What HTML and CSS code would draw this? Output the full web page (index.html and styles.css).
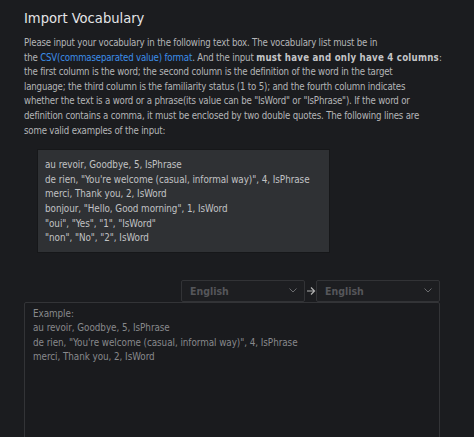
FILE: index.html
```html
<!DOCTYPE html>
<html>
<head>
<meta charset="utf-8">
<link rel="stylesheet" href="styles.css">
</head>
<body>
<div class="page">
  <h1 class="title">Import Vocabulary</h1>
  <p class="intro">Please input your vocabulary in the following text box. The vocabulary list must be in<br>the <a class="link" href="#">CSV(commaseparated value) format</a>. And the input <b>must have and only have 4 columns</b>:<br>the first column is the word; the second column is the definition of the word in the target<br>language; the third column is the familiarity status (1 to 5); and the fourth column indicates<br>whether the text is a word or a phrase(its value can be "IsWord" or "IsPhrase"). If the word or<br>definition contains a comma, it must be enclosed by two double quotes. The following lines are<br>some valid examples of the input:</p>
  <div class="example">
    <div>au revoir, Goodbye, 5, IsPhrase</div>
    <div>de rien, "You're welcome (casual, informal way)", 4, IsPhrase</div>
    <div>merci, Thank you, 2, IsWord</div>
    <div>bonjour, "Hello, Good morning", 1, IsWord</div>
    <div>"oui", "Yes", "1", "IsWord"</div>
    <div>"non", "No", "2", IsWord</div>
  </div>
  <div class="langs">
    <div class="select"><span>English</span><svg class="chev" width="8" height="5" viewBox="0 0 8 5"><path d="M0.5 0.5 L4 4 L7.5 0.5" fill="none" stroke="#6a6b6e" stroke-width="1"/></svg></div>
    <svg class="arrow" width="10" height="10" viewBox="0 0 10 10"><path d="M1 5 H8.5 M5 1.5 L8.5 5 L5 8.5" fill="none" stroke="#b0b0b0" stroke-width="1.2"/></svg>
    <div class="select"><span>English</span><svg class="chev" width="8" height="5" viewBox="0 0 8 5"><path d="M0.5 0.5 L4 4 L7.5 0.5" fill="none" stroke="#6a6b6e" stroke-width="1"/></svg></div>
  </div>
  <div class="input">
    <div>Example:</div>
    <div>au revoir, Goodbye, 5, IsPhrase</div>
    <div>de rien, "You're welcome (casual, informal way)", 4, IsPhrase</div>
    <div>merci, Thank you, 2, IsWord</div>
  </div>
</div>
</body>
</html>
```
FILE: styles.css
```css
html, body {
  margin: 0;
  padding: 0;
  background: #1b1c1f;
  height: 100%;
  overflow: hidden;
}
.page {
  width: 416px;
  padding: 9px 0 0 24px;
  font-family: "DejaVu Sans Condensed", "DejaVu Sans", sans-serif;
  color: #b4b5b7;
}
.title {
  margin: 0;
  font-weight: normal;
  font-size: 14.6px;
  line-height: 18px;
  color: #e4e5e7;
}
.intro {
  margin: 9px 0 0;
  font-size: 9.6px;
  line-height: 14.6px;
  white-space: nowrap;
  letter-spacing: -0.18px;
}
.intro b {
  font-weight: bold;
  color: #c4c5c7;
  letter-spacing: 0.25px;
}
.link {
  color: #3b8eea;
  text-decoration: none;
}
.example {
  margin: 12px 0 0 14px;
  width: 291px;
  box-sizing: border-box;
  padding: 8px 7px 6px;
  background: #2f3134;
  box-shadow: 0 0 0 1px #161719;
  font-size: 9.8px;
  line-height: 14.6px;
  color: #c1c2c4;
  letter-spacing: -0.05px;
}
.langs {
  margin-top: 28px;
  display: flex;
  justify-content: flex-end;
  align-items: center;
}
.select {
  width: 124px;
  height: 22px;
  box-sizing: border-box;
  border: 1px solid #323336;
  border-radius: 2px;
  background: #1d1e21;
  display: flex;
  align-items: center;
  justify-content: space-between;
  padding: 0 7px 0 8px;
  font-size: 10.5px;
  font-weight: bold;
  color: #55565a;
}
.arrow {
  margin: 0 0 0 1px;
  width: 10px;
}
.input {
  margin-top: 0;
  height: 140px;
  box-sizing: border-box;
  border: 1px solid #333437;
  border-radius: 2px;
  background: #1a1b1e;
  padding: 4px 8px;
  font-size: 9.8px;
  line-height: 14.4px;
  color: #88898c;
  letter-spacing: -0.05px;
}
```
